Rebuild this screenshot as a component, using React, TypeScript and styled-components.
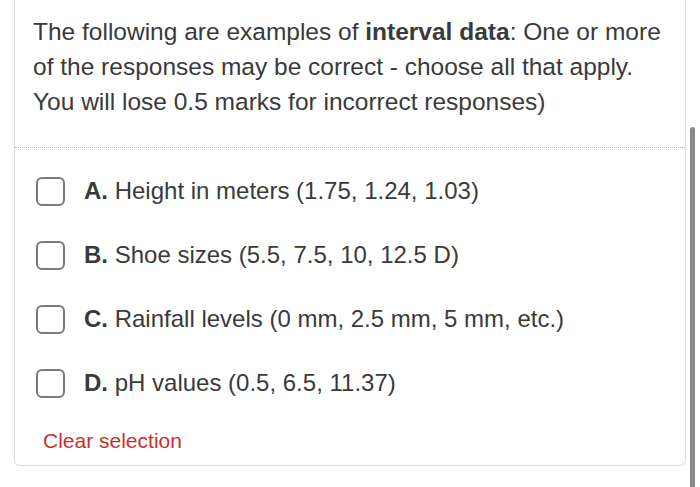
import { FC } from 'react';
import styled, { createGlobalStyle } from 'styled-components';

const Color = {
    text: '#3a3a3a',
    border: '#dcdcdc',
    dotted: '#b8b8b8',
    box: '#7a7a7a',
    red: '#c9302c',
};

const options = [
    { key: 'A', label: 'Height in meters (1.75, 1.24, 1.03)' },
    { key: 'B', label: 'Shoe sizes (5.5, 7.5, 10, 12.5 D)' },
    { key: 'C', label: 'Rainfall levels (0 mm, 2.5 mm, 5 mm, etc.)' },
    { key: 'D', label: 'pH values (0.5, 6.5, 11.37)' },
];

const App: FC = () => {
    return (
        <>
            <GlobalStyle />
            <Spage>
                <Scard>
                    <Squestion>
                        The following are examples of <strong>interval data</strong>: One or more<br />
                        of the responses may be correct - choose all that apply.<br />
                        You will lose 0.5 marks for incorrect responses)
                    </Squestion>
                    <Soptions>
                        {options.map((o) => (
                            <Soption key={o.key}>
                                <Sbox />
                                <span>
                                    <b>{o.key}.</b> {o.label}
                                </span>
                            </Soption>
                        ))}
                    </Soptions>
                    <Sclear>Clear selection</Sclear>
                </Scard>
                <Sthumb />
            </Spage>
        </>
    );
};

export default App;

const GlobalStyle = createGlobalStyle`
    html, body {
        margin: 0;
        background: #fff;
        overflow: hidden;
    }
    body {
        font-family: "Liberation Sans", Arial, sans-serif;
        color: ${Color.text};
    }
`;

const Spage = styled.div`
    position: relative;
    height: 487px;
    padding-left: 14px;
`;

const Scard = styled.div`
    width: 672px;
    border: 1px solid ${Color.border};
    border-top: none;
    border-radius: 0 0 6px 6px;
    height: 466px;
    box-sizing: border-box;
`;

const Squestion = styled.p`
    margin: 0;
    padding: 14px 10px 0 18px;
    height: 148px;
    box-sizing: border-box;
    font-size: 24.5px;
    line-height: 35px;
    white-space: nowrap;
    border-bottom: 1px dotted ${Color.dotted};

    strong {
        font-weight: bold;
    }
`;

const Soptions = styled.ul`
    list-style: none;
    margin: 0;
    padding: 11px 0 0 21px;
`;

const Soption = styled.li`
    display: flex;
    align-items: center;
    gap: 19px;
    height: 64px;
    font-size: 24px;
    white-space: nowrap;
`;

const Sbox = styled.span`
    width: 25px;
    height: 25px;
    border: 2px solid ${Color.box};
    border-radius: 6px;
    flex-shrink: 0;
`;

const Sclear = styled.div`
    padding-left: 28px;
    margin-top: 14px;
    font-size: 21px;
    line-height: 24px;
    color: ${Color.red};
`;

const Sthumb = styled.div`
    position: absolute;
    left: 690px;
    top: 127px;
    width: 5px;
    height: 360px;
    border-radius: 3px 3px 0 0;
    background: #8a8a8a;
`;
